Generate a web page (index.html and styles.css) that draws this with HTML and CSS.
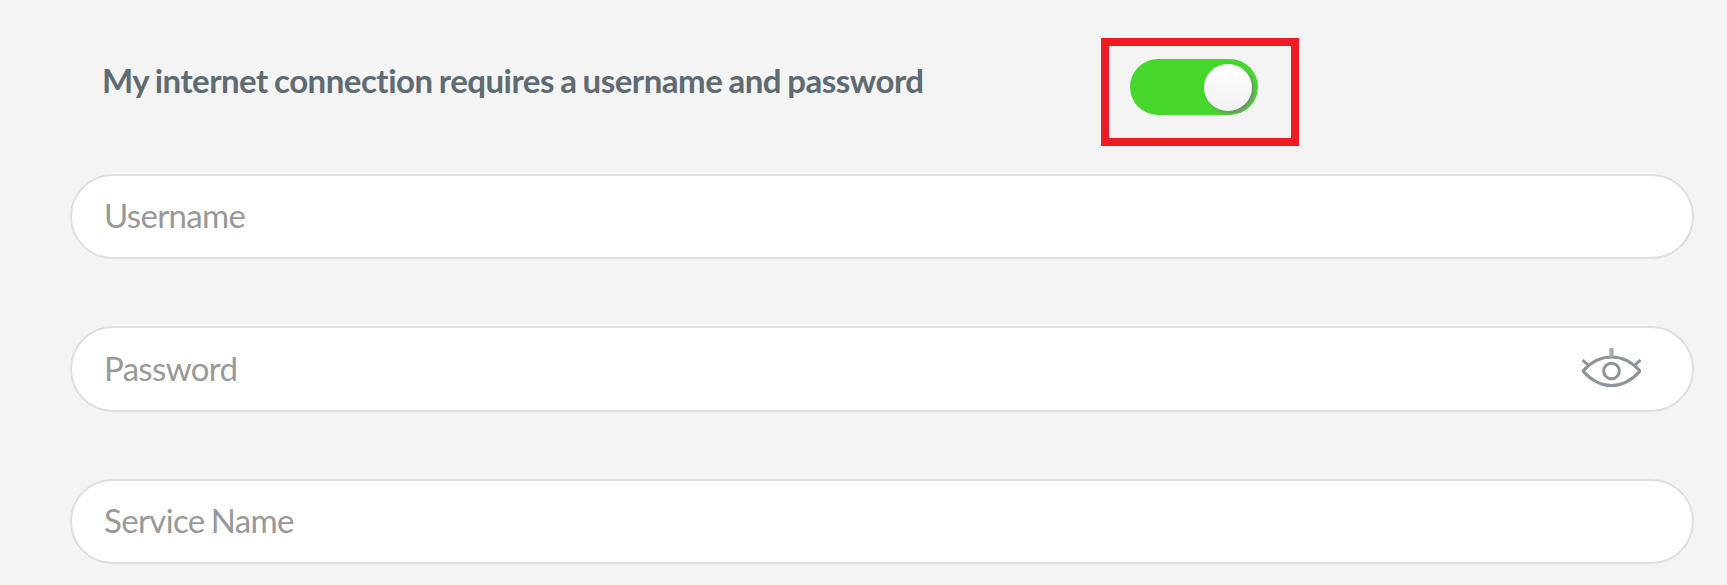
FILE: index.html
```html
<!DOCTYPE html>
<html lang="en">
<head>
<meta charset="utf-8">
<title>Internet connection</title>
<link rel="stylesheet" href="styles.css">
</head>
<body>
<form class="settings">
  <div class="toggle-row">
    <span class="toggle-label">My internet connection requires a username and password</span>
    <div class="highlight">
      <div class="switch" role="switch" aria-checked="true"><div class="knob"></div></div>
    </div>
  </div>
  <div class="fields">
    <div class="field"><input class="input" type="text" placeholder="Username"></div>
    <div class="field field-password">
      <input class="input" type="password" placeholder="Password">
      <svg class="eye" viewBox="0 0 59 42" width="59" height="42">
        <path d="M1 23C9 14 18.500 9 29.500 9S50 14 58 23C50 32 40.500 37.500 29.500 37.500S9 32 1 23Z"/>
        <circle cx="29.500" cy="23" r="7.800"/>
        <path class="lash" d="M29.500 0V9"/>
        <path d="M0.500 12L6.500 17.500M58.500 12L52.500 17.500"/>
      </svg>
    </div>
    <div class="field"><input class="input" type="text" placeholder="Service Name"></div>
  </div>
</form>
</body>
</html>
```
FILE: styles.css
```css
* { box-sizing: border-box; }
body {
  margin: 0;
  height: 585px;
  overflow: hidden;
  background: #f4f4f4;
  font-family: Lato, "Liberation Sans", sans-serif;
}
.settings { padding: 38px 33px 0 70px; }
.toggle-row {
  display: flex;
  align-items: flex-start;
  height: 108px;
  padding-left: 32px;
}
.toggle-label {
  width: 999px;
  padding-top: 22px;
  font-size: 33px;
  line-height: 40px;
  font-weight: 700;
  letter-spacing: -0.5px;
  word-spacing: -1.3px;
  color: #5f6b72;
  white-space: nowrap;
}
.highlight {
  width: 198px;
  height: 108px;
  padding: 13px 21px;
  border: 8px solid #ef1b23;
}
.switch {
  display: flex;
  justify-content: flex-end;
  width: 128px;
  height: 56px;
  padding: 5px 6px 3px;
  border-radius: 28px;
  background: #46d72d;
}
.knob {
  width: 48px;
  height: 47px;
  border-radius: 50%;
  background: linear-gradient(#ffffff, #f1f1f1);
  box-shadow: 2px 2px 3px #808080;
}
.fields {
  display: flex;
  flex-direction: column;
  gap: 67px;
  margin-top: 28px;
}
.field {
  display: flex;
  align-items: center;
  height: 85px;
  padding: 0 51px 0 32px;
  border: 2px solid #dedede;
  border-radius: 43px;
  background: #fff;
}
.field-password { height: 86px; }
.input {
  flex: 1;
  min-width: 0;
  height: 60px;
  padding: 0 0 3px;
  border: 0;
  outline: 0;
  background: transparent;
  font: 400 33px/40px Lato, "Liberation Sans", sans-serif;
  letter-spacing: -0.66px;
  word-spacing: -1.5px;
  color: #999;
}
.input::placeholder { color: #999; opacity: 1; }
.eye {
  fill: none;
  stroke: #8b9499;
  stroke-width: 3;
}
.lash {
  stroke: #a3aaae;
  stroke-width: 4;
}
```
